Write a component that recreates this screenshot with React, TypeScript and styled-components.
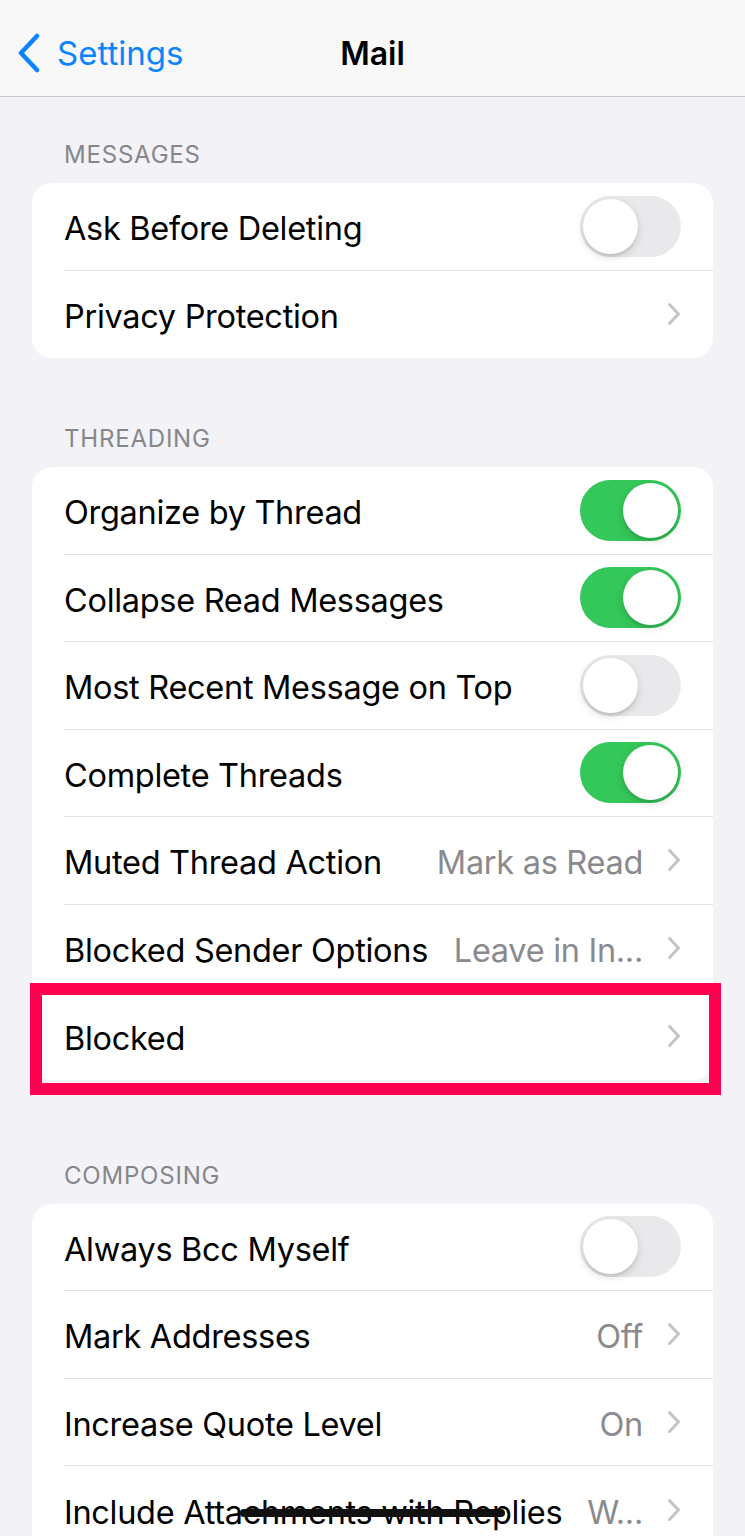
import React from 'react';
import styled, { createGlobalStyle } from 'styled-components';

const GlobalStyle = createGlobalStyle`
  html, body {
    margin: 0;
    padding: 0;
    background: #f2f2f7;
    font-family: Inter, "Noto Sans", "Liberation Sans", sans-serif;
    -webkit-font-smoothing: antialiased;
  }
`;

const Page = styled.div`
  position: relative;
  width: 745px;
  min-height: 1536px;
  background: #f2f2f7;
  overflow: hidden;
`;

const NavBar = styled.div`
  height: 97px;
  background: #f8f8f8;
  border-bottom: 1px solid #c8c8cc;
  display: flex;
  align-items: center;
  position: relative;
  padding-top: 10px;
  box-sizing: border-box;
`;

const BackButton = styled.div`
  display: flex;
  align-items: center;
  gap: 16px;
  padding-left: 17px;
  color: #0a84ff;
  font-size: 33px;
  letter-spacing: 0;
`;

const Title = styled.div`
  position: absolute;
  left: 0;
  right: 0;
  top: 10px;
  bottom: 0;
  display: flex;
  align-items: center;
  justify-content: center;
  font-size: 32px;
  font-weight: 600;
  color: #000;
  pointer-events: none;
`;

const Content = styled.div`
  padding: 0 32px;
`;

const SectionHeader = styled.div<{ $top: number }>`
  padding: ${(p) => p.$top}px 64px 13px;
  font-size: 24px;
  color: #86868b;
  letter-spacing: 0.8px;
  line-height: 30px;
`;

const Card = styled.div`
  background: #fff;
  border-radius: 20px;
  overflow: hidden;
`;

const Row = styled.div<{ $last?: boolean }>`
  height: 87.5px;
  margin-left: 32px;
  padding-right: 32px;
  display: flex;
  align-items: center;
  border-bottom: ${(p) => (p.$last ? 'none' : '1px solid #e0e0e3')};
  box-sizing: border-box;
`;

const Label = styled.div`
  flex: 1;
  font-size: 32.5px;
  color: #000;
  white-space: nowrap;
  letter-spacing: -0.3px;
  padding-top: 5px;
`;

const Value = styled.div`
  font-size: 32.5px;
  color: #8a8a8e;
  white-space: nowrap;
  margin-right: 24px;
  letter-spacing: -0.3px;
  padding-top: 5px;
`;

const Track = styled.div<{ $on: boolean }>`
  width: 101px;
  height: 61px;
  border-radius: 31px;
  background: ${(p) => (p.$on ? '#34c759' : '#e9e9eb')};
  position: relative;
  flex-shrink: 0;
`;

const Knob = styled.div<{ $on: boolean }>`
  position: absolute;
  top: 3px;
  left: ${(p) => (p.$on ? '43px' : '3px')};
  width: 55px;
  height: 55px;
  border-radius: 50%;
  background: #fff;
  box-shadow: 0 3px 8px rgba(0, 0, 0, 0.15), 0 3px 1px rgba(0, 0, 0, 0.06);
`;

const Highlight = styled.div`
  position: absolute;
  left: 30px;
  top: 983px;
  width: 691px;
  height: 112px;
  border: 12px solid #ff0050;
  box-sizing: border-box;
`;

const HomeBar = styled.div`
  position: absolute;
  left: 240px;
  top: 1509px;
  width: 265px;
  height: 8px;
  border-radius: 4px;
  background: #111;
`;

const Chevron = () => (
  <svg width="14" height="24" viewBox="0 0 14 24" style={{ flexShrink: 0 }}>
    <path d="M2.5 2.5 L11.5 12 L2.5 21.5" fill="none" stroke="#c4c4c7" strokeWidth="3" strokeLinecap="round" strokeLinejoin="round" />
  </svg>
);

const BackChevron = () => (
  <svg width="24" height="40" viewBox="0 0 24 40">
    <path d="M20 3 L4 20 L20 37" fill="none" stroke="#0a84ff" strokeWidth="4.5" strokeLinecap="round" strokeLinejoin="round" />
  </svg>
);

type Item = { label: string; toggle?: boolean; value?: string };

const Toggle = ({ on }: { on: boolean }) => (
  <Track $on={on}>
    <Knob $on={on} />
  </Track>
);

const Section = ({ title, items, top }: { title: string; items: Item[]; top: number }) => (
  <>
    <SectionHeader $top={top}>{title}</SectionHeader>
    <Content>
      <Card>
        {items.map((it, i) => (
          <Row key={it.label} $last={i === items.length - 1}>
            <Label>{it.label}</Label>
            {it.toggle !== undefined ? (
              <Toggle on={it.toggle} />
            ) : (
              <>
                {it.value && <Value>{it.value}</Value>}
                <Chevron />
              </>
            )}
          </Row>
        ))}
      </Card>
    </Content>
  </>
);

const messages: Item[] = [
  { label: 'Ask Before Deleting', toggle: false },
  { label: 'Privacy Protection' },
];

const threading: Item[] = [
  { label: 'Organize by Thread', toggle: true },
  { label: 'Collapse Read Messages', toggle: true },
  { label: 'Most Recent Message on Top', toggle: false },
  { label: 'Complete Threads', toggle: true },
  { label: 'Muted Thread Action', value: 'Mark as Read' },
  { label: 'Blocked Sender Options', value: 'Leave in In...' },
  { label: 'Blocked' },
];

const composing: Item[] = [
  { label: 'Always Bcc Myself', toggle: false },
  { label: 'Mark Addresses', value: 'Off' },
  { label: 'Increase Quote Level', value: 'On' },
  { label: 'Include Attachments with Replies', value: 'W...' },
];

export default function App() {
  return (
    <Page>
      <GlobalStyle />
      <NavBar>
        <BackButton>
          <BackChevron />
          <span>Settings</span>
        </BackButton>
        <Title>Mail</Title>
      </NavBar>
      <Section title="MESSAGES" items={messages} top={43} />
      <Section title="THREADING" items={threading} top={66} />
      <Section title="COMPOSING" items={composing} top={81} />
      <Highlight />
      <HomeBar />
    </Page>
  );
}
